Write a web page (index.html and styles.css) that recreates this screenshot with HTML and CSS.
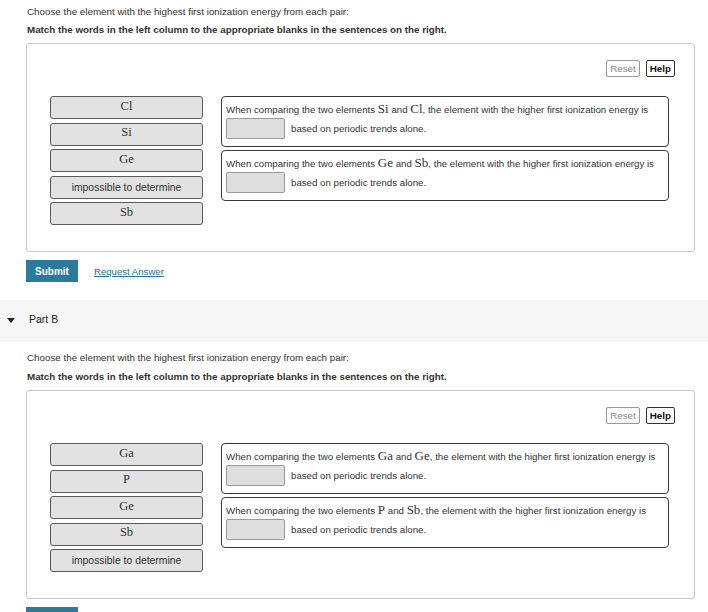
FILE: index.html
```html
<!DOCTYPE html>
<html>
<head>
<meta charset="utf-8">
<link rel="stylesheet" href="styles.css">
</head>
<body>
<div class="part part-a">
  <p class="prompt">Choose the element with the highest first ionization energy from each pair:</p>
  <p class="instr">Match the words in the left column to the appropriate blanks in the sentences on the right.</p>
  <div class="dnd">
    <div class="tools"><span class="btn reset">Reset</span><span class="btn help">Help</span></div>
    <div class="work">
      <div class="tiles">
        <div class="tile el">Cl</div>
        <div class="tile el">Si</div>
        <div class="tile el">Ge</div>
        <div class="tile word">impossible to determine</div>
        <div class="tile el">Sb</div>
      </div>
      <div class="sentences">
        <div class="sent">
          <div class="line1">When comparing the two elements <span class="m">Si</span> and <span class="m">Cl</span>, the element with the higher first ionization energy is</div>
          <div class="line2"><span class="blank"></span><span>based on periodic trends alone.</span></div>
        </div>
        <div class="sent">
          <div class="line1">When comparing the two elements <span class="m">Ge</span> and <span class="m">Sb</span>, the element with the higher first ionization energy is</div>
          <div class="line2"><span class="blank"></span><span>based on periodic trends alone.</span></div>
        </div>
      </div>
    </div>
  </div>
  <div class="actions"><span class="submit">Submit</span><a class="req" href="#">Request Answer</a></div>
</div>
<div class="partbar"><span class="tri"></span><span class="ptitle">Part B</span></div>
<div class="part part-b">
  <p class="prompt">Choose the element with the highest first ionization energy from each pair:</p>
  <p class="instr">Match the words in the left column to the appropriate blanks in the sentences on the right.</p>
  <div class="dnd">
    <div class="tools"><span class="btn reset">Reset</span><span class="btn help">Help</span></div>
    <div class="work">
      <div class="tiles">
        <div class="tile el">Ga</div>
        <div class="tile el">P</div>
        <div class="tile el">Ge</div>
        <div class="tile el">Sb</div>
        <div class="tile word">impossible to determine</div>
      </div>
      <div class="sentences">
        <div class="sent">
          <div class="line1">When comparing the two elements <span class="m">Ga</span> and <span class="m">Ge</span>, the element with the higher first ionization energy is</div>
          <div class="line2"><span class="blank"></span><span>based on periodic trends alone.</span></div>
        </div>
        <div class="sent">
          <div class="line1">When comparing the two elements <span class="m">P</span> and <span class="m">Sb</span>, the element with the higher first ionization energy is</div>
          <div class="line2"><span class="blank"></span><span>based on periodic trends alone.</span></div>
        </div>
      </div>
    </div>
  </div>
  <div class="actions"><span class="submit">Submit</span></div>
</div>
</body>
</html>
```
FILE: styles.css
```css
html, body { margin: 0; padding: 0; background: #fff; }
body { font-family: "Liberation Sans", Arial, sans-serif; color: #333; width: 708px; height: 612px; overflow: hidden; }
.part { padding: 0 13px 0 26px; }
.part-a { padding-top: 5px; }
.part-b { padding-top: 9px; }
.prompt { margin: 0 0 0 1px; font-size: 9.8px; line-height: 14px; color: #333; }
.instr { margin: 4px 0 0 1px; font-size: 9.8px; line-height: 14px; font-weight: bold; color: #333; }
.part-b .instr { margin-top: 5px; }
.dnd { margin-top: 6px; border: 1px solid #c8c8c8; border-radius: 3px; height: 209px; box-sizing: border-box; padding: 16px 19px 0 23px; }
.tools { display: flex; justify-content: flex-end; gap: 6px; height: 17px; }
.btn { display: inline-flex; align-items: center; height: 17px; box-sizing: border-box; padding: 0 3px; font-size: 9.8px; border-radius: 2px; background: #fff; }
.reset { color: #888; border: 1px solid #999; }
.help { color: #111; font-weight: bold; border: 1px solid #333; }
.work { display: flex; gap: 18px; margin-top: 19px; }
.tiles { display: flex; flex-direction: column; gap: 3.5px; width: 153px; }
.tile { height: 23px; box-sizing: border-box; background: #e2e2e2; border: 1px solid #5a5a5a; border-radius: 3px; display: flex; align-items: center; justify-content: center; color: #333; }
.tile.el { font-family: "Liberation Serif", "Times New Roman", serif; font-size: 12.5px; padding-bottom: 3px; }
.tile.word { font-size: 10.4px; }
.sentences { display: flex; flex-direction: column; gap: 3px; width: 448px; }
.sent { height: 51px; box-sizing: border-box; border: 1px solid #3a3a3a; border-radius: 4px; padding: 3px 4px 0 4px; font-size: 9.7px; color: #333; }
.line1 { height: 18px; display: flex; align-items: center; white-space: pre; }
.m { font-family: "Liberation Serif", "Times New Roman", serif; font-size: 13px; }
.line2 { display: flex; align-items: center; gap: 6px; }
.blank { width: 59px; height: 21px; box-sizing: border-box; background: #dedede; border: 1px solid #9a9a9a; border-radius: 2px; }
.actions { display: flex; align-items: center; gap: 16px; margin-top: 8px; height: 22px; }
.submit { display: inline-flex; align-items: center; justify-content: center; width: 52px; height: 22px; background: #2b7a9c; color: #fff; font-weight: bold; font-size: 10px; }
.req { color: #2b6f8e; font-size: 9.6px; text-decoration: underline; }
.partbar { margin-top: 18px; height: 42px; background: #f6f6f6; display: flex; align-items: center; }
.tri { width: 0; height: 0; border-left: 4px solid transparent; border-right: 4px solid transparent; border-top: 5px solid #222; margin-left: 7px; margin-top: -2px; }
.ptitle { margin-left: 14px; font-size: 10.5px; color: #222; margin-top: -4px; }
```
